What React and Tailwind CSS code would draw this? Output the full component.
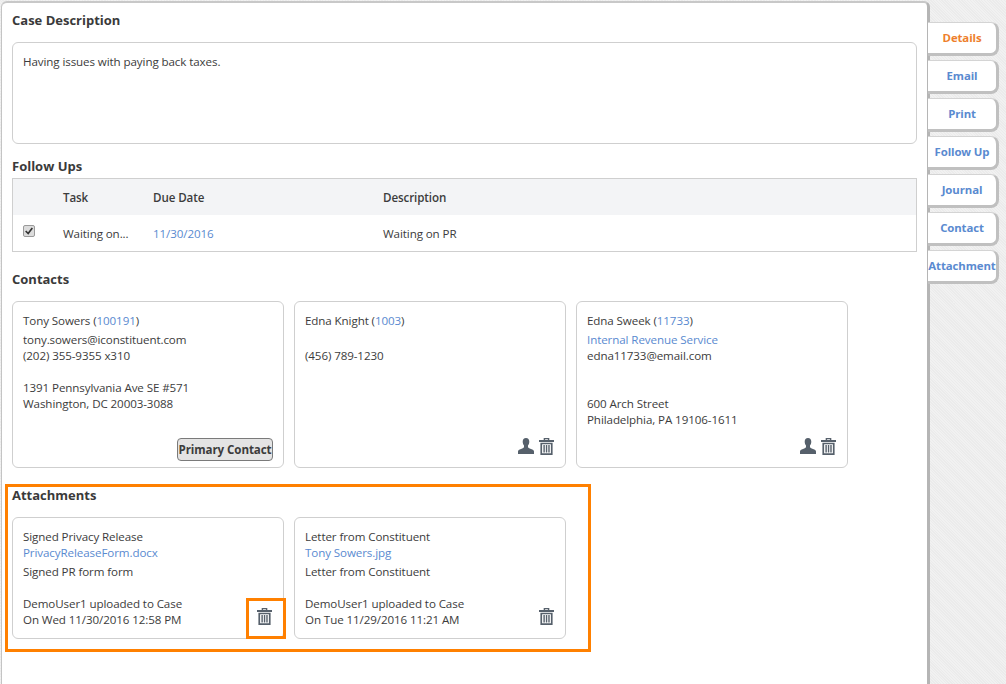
const font = { fontFamily: "'Open Sans', 'Noto Sans', sans-serif" };

const tabs = ["Details", "Email", "Print", "Follow Up", "Journal", "Contact", "Attachment"];

function TrashIcon({ className = "" }) {
  return (
    <svg viewBox="0 0 16 18" className={`w-[15px] h-[17px] ${className}`} fill="#56606b">
      <path d="M5 0h6v2h5v2.200H0V2h5zM6.500 1.200v.8h3v-.8z" fillRule="evenodd" />
      <path
        d="M1.500 5h13v13h-13zM3.300 6.500V16.300h9.400V6.500zM4.700 7.500h1.500v7.800H4.700zM7.300 7.500h1.500v7.800H7.300zM9.900 7.500h1.500v7.800H9.900z"
        fillRule="evenodd"
      />
    </svg>
  );
}

function UserIcon() {
  return (
    <svg viewBox="0 0 16 16" className="w-4 h-4" fill="#56606b">
      <path d="M8 0c2.200 0 3.300 1.500 3.300 3.800 0 1.500-.6 3-1.300 3.800v1.500c0 .8 1.200 1.200 3 2 1.900.8 3 1.300 3 2.300V16H0v-2.600c0-1 1.100-1.500 3-2.300 1.800-.8 3-1.200 3-2V7.600C5.300 6.800 4.700 5.300 4.700 3.800 4.700 1.500 5.800 0 8 0z" />
    </svg>
  );
}

function Heading({ children, className = "" }) {
  return <h2 className={`text-[13px] leading-5 font-bold text-[#3a3a3a] tracking-normal ${className}`}>{children}</h2>;
}

function Link({ children }) {
  return <span className="text-[#5a8ad0]">{children}</span>;
}

function ContactCard({ children, footer }) {
  return (
    <div className="w-[272px] h-[167px] border border-[#cfcfcf] rounded-md px-[10px] pt-[11px] pb-[6px] flex flex-col justify-between">
      <div className="leading-4">{children}</div>
      <div className="flex justify-end items-start h-[23px] gap-[5px] pr-[1px]">{footer}</div>
    </div>
  );
}

function AttachmentCard({ title, file, note, user, date }) {
  return (
    <div className="w-[272px] h-[122px] border border-[#cfcfcf] rounded-md px-[10px] pt-[11px]">
      <div className="leading-4">{title}</div>
      <div className="leading-4"><Link>{file}</Link></div>
      <div className="leading-4 mt-[3px]">{note}</div>
      <div className="flex justify-between items-end mt-4 pr-[1px]">
        <div className="leading-4">
          <div>{user}</div>
          <div>{date}</div>
        </div>
        <TrashIcon className="mb-[3px]" />
      </div>
    </div>
  );
}

export default function App() {
  return (
    <div className="relative w-[1006px] h-[684px] overflow-hidden bg-[#efefef] bg-[repeating-linear-gradient(45deg,#f1f1f1_0,#f1f1f1_1px,#ebebeb_1px,#ebebeb_2px)] text-[11.6px] tracking-[-0.1px] text-[#3c3c3c]" style={font}>
      <div className="flex h-full">
        <div className="w-[929px] h-[690px] mt-[1px] ml-[1px] bg-white border border-[#c4c4c4] border-r-[3px] border-t-[2px] border-t-[#c8c8c8] border-r-[#b5b5b5] rounded-md px-[10px] shrink-0">
          <Heading className="mt-[7px]">Case Description</Heading>
          <div className="mt-[12px] w-[905px] h-[102px] border border-[#cfcfcf] rounded-md px-[10px] pt-[11px] leading-4">
            Having issues with paying back taxes.
          </div>

          <Heading className="mt-[12px]">Follow Ups</Heading>
          <div className="mt-[2px] w-[905px] border border-[#cfcfcf]">
            <div className="flex items-center h-9 pt-[2px] bg-[#f3f4f6] font-semibold">
              <div className="w-[50px]" />
              <div className="w-[90px]">Task</div>
              <div className="w-[230px]">Due Date</div>
              <div>Description</div>
            </div>
            <div className="flex items-center h-9 pt-[2px]">
              <div className="w-[50px] pl-[10px]">
                <div className="w-3 h-3 rounded-[2px] bg-[#dcdcdc] border border-[#9a9a9a] flex items-center justify-center mb-[6px]">
                  <svg viewBox="0 0 12 12" className="w-[10px] h-[10px]">
                    <path d="M2 6l3 3 5-6.500" fill="none" stroke="#333" strokeWidth="2" />
                  </svg>
                </div>
              </div>
              <div className="w-[90px]">Waiting on...</div>
              <div className="w-[230px]"><Link>11/30/2016</Link></div>
              <div>Waiting on PR</div>
            </div>
          </div>

          <Heading className="mt-[17px]">Contacts</Heading>
          <div className="flex gap-[10px] mt-[12px]">
            <ContactCard
              footer={
                <button className="h-[23px] w-[96px] -mr-[1px] rounded-[4px] border border-[#7a7a7a] bg-[#e4e4e4] font-bold text-[#3c3c3c] leading-none whitespace-nowrap">
                  Primary Contact
                </button>
              }
            >
              <div className="mb-[3px]">Tony Sowers (<Link>100191</Link>)</div>
              <div>tony.sowers@iconstituent.com</div>
              <div>(202) 355-9355 x310</div>
              <div className="mt-4">1391 Pennsylvania Ave SE #571</div>
              <div>Washington, DC 20003-3088</div>
            </ContactCard>
            <ContactCard footer={<><UserIcon /><TrashIcon /></>}>
              <div className="mb-[3px]">Edna Knight (<Link>1003</Link>)</div>
              <div className="h-4" />
              <div>(456) 789-1230</div>
            </ContactCard>
            <ContactCard footer={<><UserIcon /><TrashIcon /></>}>
              <div className="mb-[3px]">Edna Sweek (<Link>11733</Link>)</div>
              <div><Link>Internal Revenue Service</Link></div>
              <div>edna11733@email.com</div>
              <div className="mt-8">600 Arch Street</div>
              <div>Philadelphia, PA 19106-1611</div>
            </ContactCard>
          </div>

          <Heading className="mt-[17px]">Attachments</Heading>
          <div className="flex gap-[10px] mt-[12px]">
            <AttachmentCard
              title="Signed Privacy Release"
              file="PrivacyReleaseForm.docx"
              note="Signed PR form form"
              user="DemoUser1 uploaded to Case"
              date="On Wed 11/30/2016 12:58 PM"
            />
            <AttachmentCard
              title="Letter from Constituent"
              file="Tony Sowers.jpg"
              note="Letter from Constituent"
              user="DemoUser1 uploaded to Case"
              date="On Tue 11/29/2016 11:21 AM"
            />
          </div>
        </div>

        <div className="flex flex-col gap-1 mt-[22px] -ml-[2px] relative text-[11.4px]">
          {tabs.map((t, i) => (
            <div
              key={t}
              className={`w-[71px] h-[34px] bg-white rounded-r-lg border-r-[3px] border-b-[3px] border-t border-[#c0c0c0] border-t-[#d4d4d4] flex items-center justify-center font-bold whitespace-nowrap ${
                i === 0 ? "text-[#ee7f2d]" : "text-[#5a8ad0]"
              }`}
            >
              {t}
            </div>
          ))}
        </div>
      </div>

      {/* orange callouts on top of the screenshot */}
      <div className="absolute left-[5px] top-[484px] w-[586px] h-[168px] border-[3px] border-[#ff8000]" />
      <div className="absolute left-[246px] top-[598px] w-[40px] h-[41px] border-[3px] border-[#ff8000]" />
    </div>
  );
}
